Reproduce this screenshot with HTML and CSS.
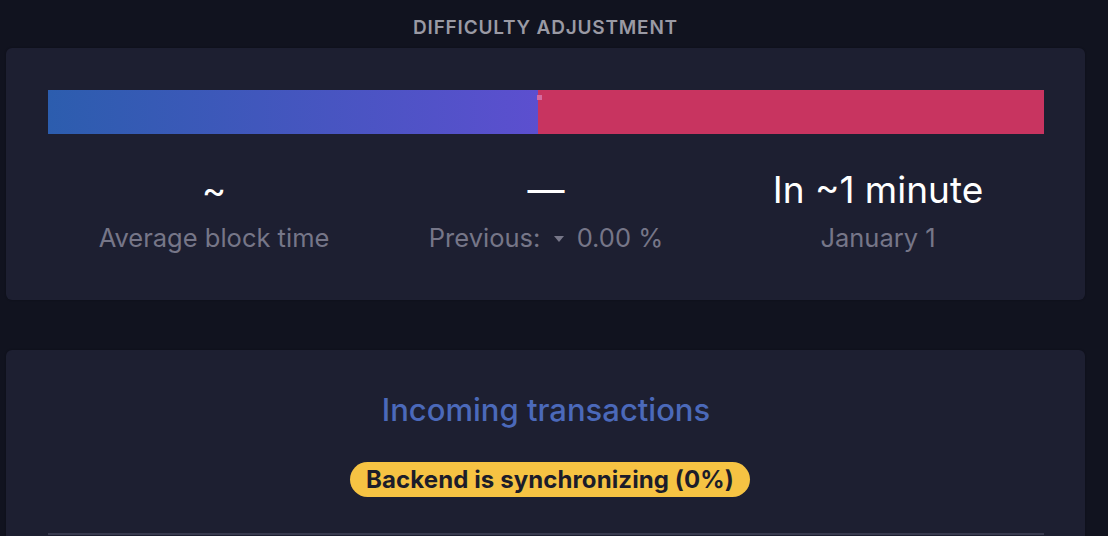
FILE: index.html
```html
<!DOCTYPE html>
<html lang="en">

<head>
    <meta http-equiv="Content-Type" content="text/html; charset=UTF-8" />
    <meta name="viewport" content="width=device-width, initial-scale=1.0">
    <title>Difficulty Adjustment</title>
    <link rel="stylesheet" href="styles.css">
</head>

<body>
    <div class="page">
        <h2 class="section-title">Difficulty Adjustment</h2>

        <div class="box difficulty-box">
            <div class="progress">
                <div class="progress-done"></div>
                <div class="progress-marker"></div>
                <div class="progress-left"></div>
            </div>

            <div class="stats">
                <div class="stat">
                    <div class="stat-value">~</div>
                    <div class="stat-label">Average block time</div>
                </div>
                <div class="stat">
                    <div class="stat-value">&mdash;</div>
                    <div class="stat-label">
                        Previous:
                        <svg class="caret" width="12" height="8" viewBox="0 0 12 8">
                            <path d="M1 1 L11 1 L6 7 Z" fill="currentColor" />
                        </svg>
                        0.00 %
                    </div>
                </div>
                <div class="stat">
                    <div class="stat-value">In ~1 minute</div>
                    <div class="stat-label">January 1</div>
                </div>
            </div>
        </div>

        <div class="box mempool-box">
            <h3 class="box-title">Incoming transactions</h3>
            <div class="badge-row">
                <span class="badge-sync">Backend is synchronizing (0%)</span>
            </div>
            <div class="divider"></div>
        </div>
    </div>
</body>

</html>
```

FILE: styles.css
```css
body {
    background-color: #11131f;
    font-family: Inter, 'Liberation Sans', Arial, sans-serif;
    margin: 0;
    padding: 0;
    color: #ffffff;
    overflow: hidden;
}

.page {
    padding: 0 23px 0 6px;
}

.section-title {
    margin: 0;
    height: 48px;
    line-height: 55px;
    text-align: center;
    font-size: 19px;
    font-weight: 600;
    letter-spacing: 0.8px;
    text-transform: uppercase;
    color: #9a9aa4;
}

.box {
    background-color: #1d1f31;
    border-radius: 6px;
    box-shadow: 0 0 2px rgba(0, 0, 0, 0.3);
}

.difficulty-box {
    padding: 42px 41px 0 42px;
    height: 252px;
    box-sizing: border-box;
}

.progress {
    display: flex;
    height: 44px;
    position: relative;
}

.progress-done {
    width: 490px;
    background: linear-gradient(to right, #2c5dae, #5c4fcf);
}

.progress-left {
    flex: 1;
    background-color: #c83460;
}

.progress-marker {
    position: absolute;
    left: 489px;
    top: 5px;
    width: 5px;
    height: 5px;
    background-color: #d56b9f;
}

.stats {
    display: grid;
    grid-template-columns: 1fr 1fr 1fr;
    margin-top: 35px;
}

.stat {
    text-align: center;
}

.stat-value {
    font-size: 37px;
    line-height: 42px;
    font-weight: 400;
    color: #ffffff;
}

.stat-label {
    margin-top: 12px;
    font-size: 25.5px;
    line-height: 30px;
    color: #767688;
}

.caret {
    margin: 0 4px 3px 6px;
    vertical-align: middle;
}

.mempool-box {
    margin-top: 50px;
    padding: 39px 41px 0 42px;
    height: 200px;
}

.box-title {
    margin: 0;
    text-align: center;
    font-size: 31px;
    line-height: 42px;
    font-weight: 500;
    color: #4b69ba;
}

.badge-row {
    text-align: center;
    margin-top: 31px;
    padding-left: 8px;
}

.badge-sync {
    display: inline-block;
    background-color: #f6c343;
    color: #1c1d2a;
    font-size: 24px;
    font-weight: 700;
    line-height: 35px;
    letter-spacing: 0.1px;
    padding: 0 16px;
    border-radius: 18px;
}

.divider {
    margin-top: 36px;
    height: 2px;
    background-color: #383a4e;
}
```
